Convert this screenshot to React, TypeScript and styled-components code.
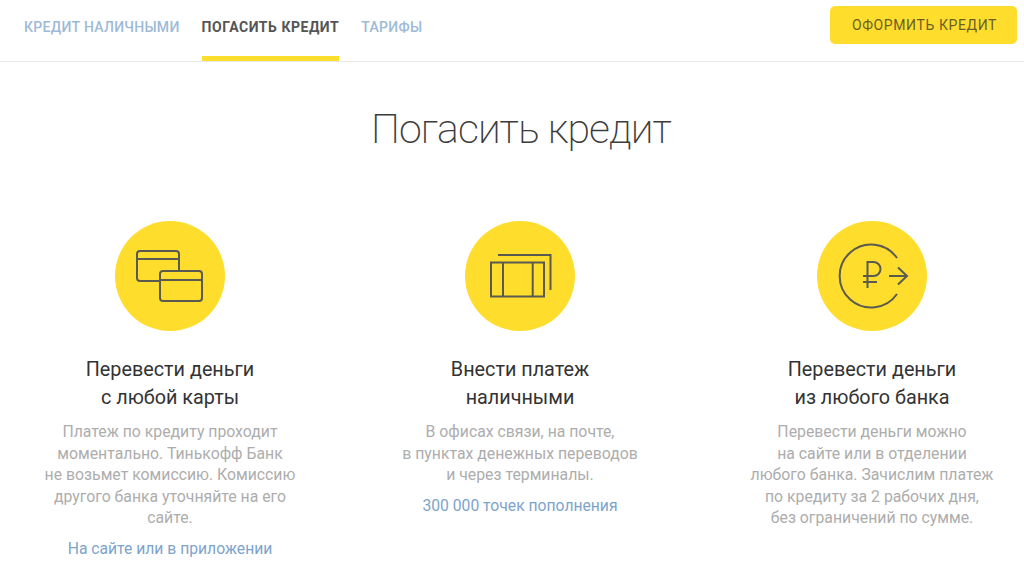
import React from "react";
import styled, { createGlobalStyle } from "styled-components";

const Global = createGlobalStyle`
  html, body { margin: 0; padding: 0; background: #fff; }
  body { font-family: Roboto, "Liberation Sans", sans-serif; overflow: hidden; }
`;

const Page = styled.div`
  width: 1024px;
  height: 561px;
  overflow: hidden;
`;

const Header = styled.header`
  height: 61px;
  border-bottom: 1px solid #e8e8e8;
  display: flex;
  justify-content: space-between;
  align-items: stretch;
  padding: 0 7px 0 24px;
  box-sizing: content-box;
`;

const Nav = styled.nav`
  display: flex;
  gap: 22px;
`;

const NavItem = styled.a<{ $active?: boolean }>`
  display: flex;
  align-items: flex-start;
  padding-top: 19px;
  box-sizing: border-box;
  height: 61px;
  font-size: 14px;
  line-height: 16px;
  letter-spacing: ${(p) => (p.$active ? "0.53px" : "0.31px")};
  font-weight: ${(p) => (p.$active ? 700 : 500)};
  color: ${(p) => (p.$active ? "#555" : "#9dbad8")};
  border-bottom: 5px solid ${(p) => (p.$active ? "#ffdd2d" : "transparent")};
`;

const CTA = styled.button`
  align-self: flex-start;
  margin-top: 6px;
  padding: 0 0 0 2px;
  width: 187px;
  height: 38px;
  border: 0;
  border-radius: 5px;
  background: #ffdd2d;
  color: #6a5f2a;
  font-family: inherit;
  font-size: 14px;
  font-weight: 400;
  letter-spacing: 0.6px;
`;

const Title = styled.h1`
  margin: 41px 0 0 18px;
  text-align: center;
  font-size: 41px;
  line-height: 52px;
  font-weight: 200;
  letter-spacing: -0.95px;
  color: #3c3c3c;
`;

const Columns = styled.div`
  display: grid;
  grid-template-columns: 270px 270px 274px;
  column-gap: 80px;
  margin: 66px 0 0 35px;
`;

const Column = styled.section`
  display: flex;
  flex-direction: column;
  align-items: center;
  text-align: center;
`;

const Circle = styled.div`
  width: 110px;
  height: 110px;
  border-radius: 50%;
  background: #ffdd2d;
  display: flex;
  align-items: center;
  justify-content: center;
`;

const Heading = styled.h2`
  margin: 25px 0 0;
  font-size: 19.8px;
  line-height: 28px;
  font-weight: 400;
  color: #333;
`;

const Text = styled.p`
  margin: 9px 0 0;
  font-size: 15.8px;
  line-height: 21.5px;
  color: #adadad;
`;

const More = styled.a`
  margin-top: 9px;
  font-size: 15.7px;
  line-height: 22px;
  color: #7ea3cb;
`;

const Icon = styled.svg`
  width: 110px;
  height: 110px;
  fill: none;
  stroke: #5a5a50;
  stroke-width: 2;
`;

const CardsIcon = () => (
  <Icon viewBox="0 0 110 110">
    <path d="M64 50V33a3 3 0 0 0-3-3H25a3 3 0 0 0-3 3v24a3 3 0 0 0 3 3h20" />
    <path d="M22 38h42" />
    <rect x="45" y="50" width="42" height="30" rx="3" />
    <path d="M45 59h42" />
  </Icon>
);

const CashIcon = () => (
  <Icon viewBox="0 0 110 110">
    <path d="M33 34h52.500V69" />
    <rect x="26" y="41.500" width="53" height="34" />
    <path d="M38 41.500v34M67.700 41.500v34" />
  </Icon>
);

const RubleIcon = () => (
  <Icon viewBox="0 0 110 110">
    <path d="M80 37A31.500 31.500 0 1 0 80 73" />
    <path d="M50.500 67V41h6a7 7 0 0 1 0 14H46M46 61h14" />
    <path d="M72 55h18M81 46.500 90 55 81 63.500" />
  </Icon>
);

const items = [
  {
    icon: <CardsIcon />,
    heading: ["Перевести деньги", "с любой карты"],
    text: ["Платеж по кредиту проходит", "моментально. Тинькофф Банк", "не возьмет комиссию. Комиссию", "другого банка уточняйте на его", "сайте."],
    more: "На сайте или в приложении",
  },
  {
    icon: <CashIcon />,
    heading: ["Внести платеж", "наличными"],
    text: ["В офисах связи, на почте,", "в пунктах денежных переводов", "и через терминалы."],
    more: "300 000 точек пополнения",
  },
  {
    icon: <RubleIcon />,
    heading: ["Перевести деньги", "из любого банка"],
    text: ["Перевести деньги можно", "на сайте или в отделении", "любого банка. Зачислим платеж", "по кредиту за 2 рабочих дня,", "без ограничений по сумме."],
  },
];

const Lines = ({ lines }: { lines: string[] }) => (
  <>
    {lines.map((l, i) => (
      <React.Fragment key={i}>
        {i > 0 && <br />}
        {l}
      </React.Fragment>
    ))}
  </>
);

export default function App() {
  return (
    <Page>
      <Global />
      <Header>
        <Nav>
          <NavItem>КРЕДИТ НАЛИЧНЫМИ</NavItem>
          <NavItem $active>ПОГАСИТЬ КРЕДИТ</NavItem>
          <NavItem>ТАРИФЫ</NavItem>
        </Nav>
        <CTA>ОФОРМИТЬ КРЕДИТ</CTA>
      </Header>
      <Title>Погасить кредит</Title>
      <Columns>
        {items.map((it, i) => (
          <Column key={i}>
            <Circle>{it.icon}</Circle>
            <Heading><Lines lines={it.heading} /></Heading>
            <Text><Lines lines={it.text} /></Text>
            {it.more && <More>{it.more}</More>}
          </Column>
        ))}
      </Columns>
    </Page>
  );
}
